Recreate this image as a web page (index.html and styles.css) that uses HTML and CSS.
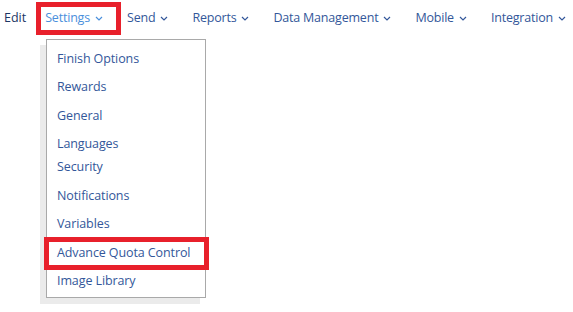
FILE: index.html
```html
<!DOCTYPE html>
<html>
<head>
<meta charset="utf-8">
<link rel="stylesheet" href="styles.css">
</head>
<body>
<nav class="nav">
  <span class="nav-item edit">Edit</span>
  <span class="nav-item active">Settings<svg class="chev" viewBox="0 0 8 5" width="8" height="5"><polyline points="1,1 4,4 7,1"/></svg><span class="highlight nav-hl"></span></span>
  <span class="nav-item">Send<svg class="chev" viewBox="0 0 8 5" width="8" height="5"><polyline points="1,1 4,4 7,1"/></svg></span>
  <span class="nav-item">Reports<svg class="chev" viewBox="0 0 8 5" width="8" height="5"><polyline points="1,1 4,4 7,1"/></svg></span>
  <span class="nav-item">Data Management<svg class="chev" viewBox="0 0 8 5" width="8" height="5"><polyline points="1,1 4,4 7,1"/></svg></span>
  <span class="nav-item">Mobile<svg class="chev" viewBox="0 0 8 5" width="8" height="5"><polyline points="1,1 4,4 7,1"/></svg></span>
  <span class="nav-item">Integration<svg class="chev" viewBox="0 0 8 5" width="8" height="5"><polyline points="1,1 4,4 7,1"/></svg></span>
</nav>
<ul class="menu">
  <li class="menu-item">Finish Options</li>
  <li class="menu-item">Rewards</li>
  <li class="menu-item">General</li>
  <li class="menu-item lang">Languages</li>
  <li class="menu-item sec">Security</li>
  <li class="menu-item">Notifications</li>
  <li class="menu-item">Variables</li>
  <li class="menu-item marked">Advance Quota Control<span class="highlight menu-hl"></span></li>
  <li class="menu-item">Image Library</li>
</ul>
</body>
</html>
```
FILE: styles.css
```css
html, body {
  margin: 0;
  padding: 0;
  background: #ffffff;
}
body {
  font-family: "Open Sans", "Noto Sans", sans-serif;
  font-size: 12.5px;
  position: relative;
  width: 573px;
  height: 312px;
  overflow: hidden;
}
.nav {
  display: flex;
  align-items: center;
  height: 35px;
  padding-left: 4px;
  color: #33579a;
  letter-spacing: -0.2px;
}
.nav-item {
  position: relative;
  display: flex;
  align-items: center;
  white-space: nowrap;
  margin-right: 24px;
  line-height: 17px;
}
.nav-item.edit {
  color: #1c3664;
  margin-right: 19px;
  letter-spacing: 0;
}
.nav-item.active {
  color: #4a8fdc;
}
.chev {
  margin-left: 5px;
  margin-top: 2px;
  fill: none;
  stroke: currentColor;
  stroke-width: 1.2;
}
.highlight {
  position: absolute;
  border: 5px solid #e8202b;
  box-sizing: border-box;
}
.nav-hl {
  left: -9px;
  top: -7px;
  width: 85px;
  height: 33px;
}
.menu {
  position: absolute;
  left: 46px;
  top: 39px;
  width: 158px;
  margin: 0;
  padding: 3.75px 0 2px;
  list-style: none;
  background: #ffffff;
  border: 1px solid #a9a9a9;
  box-shadow: -6px 6px 0 #ebebeb;
}
.menu-item {
  position: relative;
  padding: 5.75px 0 5.75px 10px;
  line-height: 17px;
  color: #33579a;
  white-space: nowrap;
  letter-spacing: -0.1px;
}
.menu-item.lang {
  padding-bottom: 3px;
}
.menu-item.sec {
  padding-top: 3px;
}
.menu-hl {
  left: -3px;
  top: -1px;
  width: 165px;
  height: 33px;
}
```
